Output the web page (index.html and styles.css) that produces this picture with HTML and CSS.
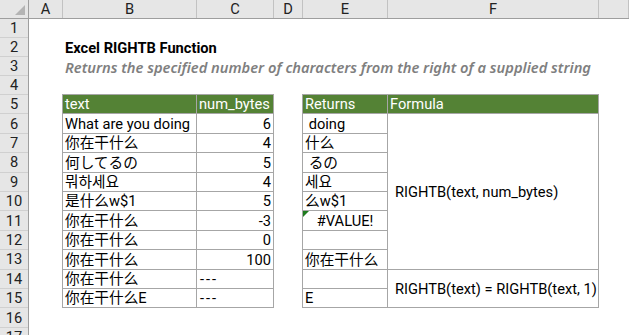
FILE: index.html
```html
<!DOCTYPE html>
<html lang="en">
<head>
    <meta charset="UTF-8">
    <title>Excel RIGHTB Function</title>
    <link rel="stylesheet" href="styles.css">
</head>
<body>
    <div class="col-heads">
        <div class="corner">
            <svg width="28" height="18" viewBox="0 0 28 18"><polygon points="25,5 25,15 15,15" fill="#b4b4b4"/></svg>
        </div>
        <div class="col-a">A</div>
        <div class="col-b">B</div>
        <div class="col-c">C</div>
        <div class="col-d">D</div>
        <div class="col-e">E</div>
        <div class="col-f">F</div>
        <div class="col-g"></div>
    </div>

    <div class="main">
        <div class="row-heads">
            <div class="short">1</div>
            <div class="short">2</div>
            <div class="short">3</div>
            <div class="short">4</div>
            <div>5</div>
            <div>6</div>
            <div>7</div>
            <div>8</div>
            <div>9</div>
            <div>10</div>
            <div>11</div>
            <div>12</div>
            <div>13</div>
            <div>14</div>
            <div>15</div>
            <div>16</div>
            <div>17</div>
        </div>

        <div class="cells">
            <div class="title">Excel RIGHTB Function</div>
            <div class="subtitle">Returns the specified number of characters from the right of a supplied string</div>

            <div class="data data-left">
                <div class="cell head">text</div>
                <div class="cell head">num_bytes</div>
                <div class="cell">What are you doing</div>
                <div class="cell num">6</div>
                <div class="cell">你在干什么</div>
                <div class="cell num">4</div>
                <div class="cell">何してるの</div>
                <div class="cell num">5</div>
                <div class="cell">뭐하세요</div>
                <div class="cell num">4</div>
                <div class="cell">是什么w$1</div>
                <div class="cell num">5</div>
                <div class="cell">你在干什么</div>
                <div class="cell num">-3</div>
                <div class="cell">你在干什么</div>
                <div class="cell num">0</div>
                <div class="cell">你在干什么</div>
                <div class="cell num">100</div>
                <div class="cell">你在干什么</div>
                <div class="cell dash">---</div>
                <div class="cell">你在干什么E</div>
                <div class="cell dash">---</div>
            </div>

            <div class="data data-right">
                <div class="cell head">Returns</div>
                <div class="cell head">Formula</div>
                <div class="cell"> doing</div>
                <div class="cell merge merge-big">RIGHTB(text, num_bytes)</div>
                <div class="cell">什么</div>
                <div class="cell"> るの</div>
                <div class="cell">세요</div>
                <div class="cell">么w$1</div>
                <div class="cell center err">#VALUE!</div>
                <div class="cell"></div>
                <div class="cell">你在干什么</div>
                <div class="cell"></div>
                <div class="cell merge merge-small">RIGHTB(text) = RIGHTB(text, 1)</div>
                <div class="cell">E</div>
            </div>
        </div>
    </div>
</body>
</html>
```

FILE: styles.css
```css
* {
    margin: 0;
    padding: 0;
    box-sizing: border-box;
}

body {
    width: 629px;
    height: 335px;
    overflow: hidden;
    background: #fff;
    color: #000;
    font-family: Roboto, "Noto Sans CJK SC", sans-serif;
    font-size: 14.67px;
}

/* column letters */
.col-heads {
    display: flex;
    height: 19px;
    background: #e6e6e6;
    border-bottom: 1px solid #9e9e9e;
}

.col-heads div {
    flex: none;
    border-right: 1px solid #c2c2c2;
    text-align: center;
    line-height: 18px;
    color: #222;
}

.col-heads .corner {
    width: 29px;
    border-right-color: #9e9e9e;
}

.corner svg {
    display: block;
}

.col-a { width: 34px; }
.col-b { width: 134px; }
.col-c { width: 77px; }
.col-d { width: 29px; }
.col-e { width: 85px; }
.col-f { width: 211px; }
.col-heads .col-g { flex: 1; }

.main {
    display: flex;
    height: 316px;
}

/* row numbers */
.row-heads {
    width: 29px;
    flex: none;
    display: flex;
    flex-direction: column;
    background: #e6e6e6;
    border-right: 1px solid #9e9e9e;
}

.row-heads div {
    flex: none;
    height: 19.42px;
    display: flex;
    align-items: center;
    justify-content: center;
    border-bottom: 1px solid #d0d0d0;
    color: #222;
}

.row-heads .short {
    height: 19px;
}

.cells {
    flex: 1;
    display: grid;
    grid-template-columns: 34px 134px 77px 29px 85px 211px 1fr;
    grid-template-rows: repeat(4, 19px) repeat(12, 19.42px) 1fr;
}

.title,
.subtitle {
    grid-column: 2 / -1;
    display: flex;
    align-items: flex-end;
    padding-left: 2px;
    line-height: 18px;
    white-space: nowrap;
}

.title {
    grid-row: 2;
    font-weight: bold;
}

.subtitle {
    grid-row: 3;
    font-family: "Noto Sans", sans-serif;
    font-style: italic;
    font-weight: 600;
    color: #7f7f7f;
}

/* bordered tables */
.data {
    grid-row: 5 / 16;
    margin: -1px 0 0 -1px;
    display: grid;
    grid-template-rows: repeat(11, 1fr);
    border-top: 1px solid #a6a6a6;
    border-left: 1px solid #a6a6a6;
}

.data-left {
    grid-column: 2 / 4;
    grid-template-columns: 134px 77px;
}

.data-right {
    grid-column: 5 / 7;
    grid-template-columns: 85px 211px;
}

.cell {
    display: flex;
    align-items: flex-end;
    padding: 0 2px 0 2px;
    line-height: 18px;
    white-space: pre;
    overflow: hidden;
    border-right: 1px solid #a6a6a6;
    border-bottom: 1px solid #a6a6a6;
}

.head {
    background: #548235;
    color: #fff;
}

.num {
    justify-content: flex-end;
}

.center {
    justify-content: center;
}

.dash {
    padding-left: 3px;
    letter-spacing: 2px;
}

.merge {
    align-items: center;
    padding-left: 7px;
}

.merge-big {
    grid-row: span 8;
}

.merge-small {
    grid-row: span 2;
}

.err {
    position: relative;
}

.err::before {
    content: '';
    position: absolute;
    top: 0;
    left: 0;
    border-top: 6px solid #1e7b1e;
    border-right: 6px solid transparent;
}
```
